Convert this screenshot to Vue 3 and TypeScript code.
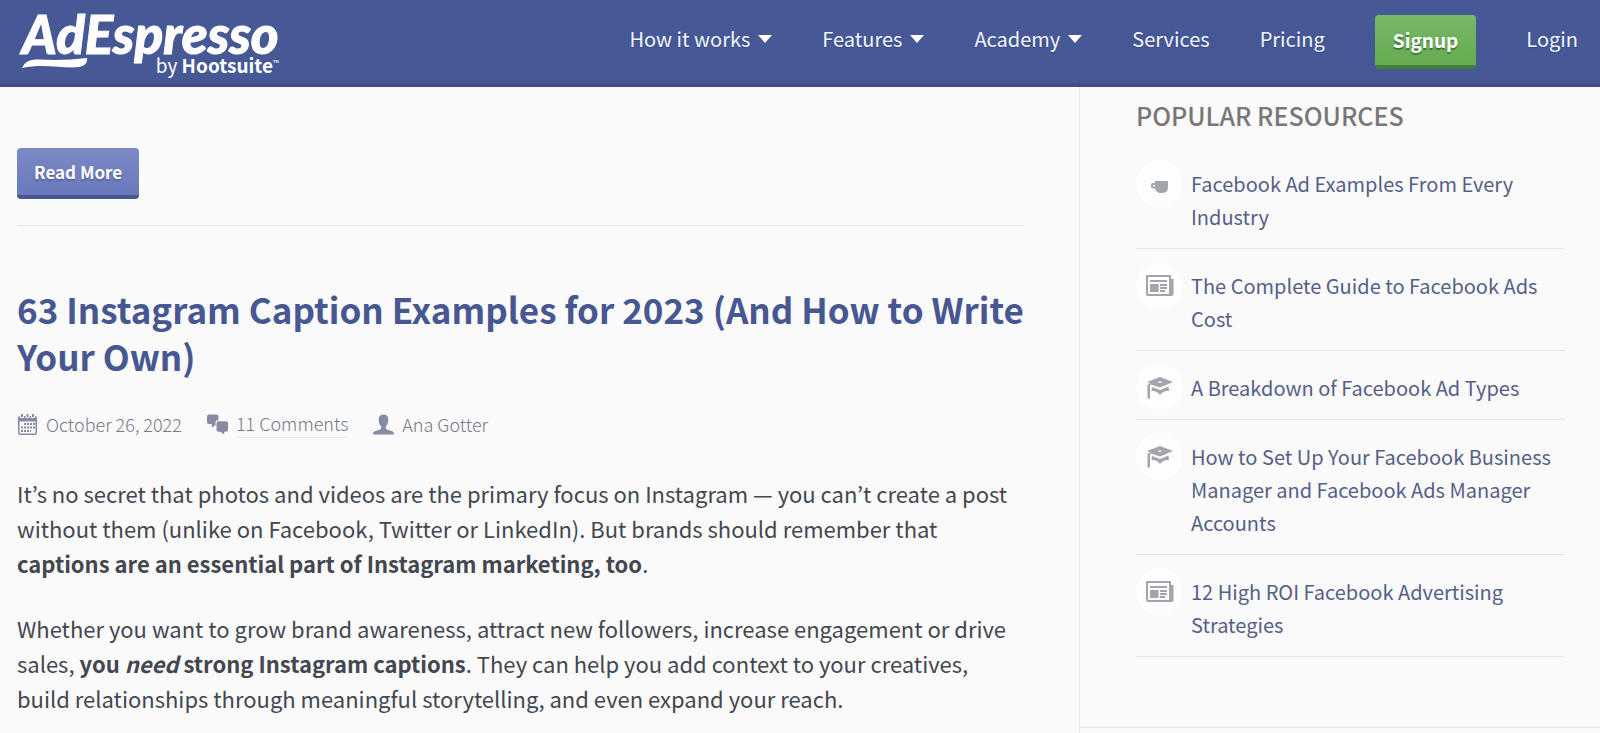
<script setup lang="ts">
type IconName = 'cup' | 'news' | 'cap'

interface NavItem {
  label: string
  menu: boolean
}

interface Resource {
  title: string
  icon: IconName
}

const navItems: NavItem[] = [
  { label: 'How it works', menu: true },
  { label: 'Features', menu: true },
  { label: 'Academy', menu: true },
  { label: 'Services', menu: false },
  { label: 'Pricing', menu: false },
]

const resources: Resource[] = [
  { title: 'Facebook Ad Examples From Every Industry', icon: 'cup' },
  { title: 'The Complete Guide to Facebook Ads Cost', icon: 'news' },
  { title: 'A Breakdown of Facebook Ad Types', icon: 'cap' },
  { title: 'How to Set Up Your Facebook Business Manager and Facebook Ads Manager Accounts', icon: 'cap' },
  { title: '12 High ROI Facebook Advertising Strategies', icon: 'news' },
]
</script>

<template>
  <div class="page">
    <header class="header">
      <a class="logo" href="#">
        <span class="logo-name">AdEspresso</span>
        <span class="logo-sub">
          <svg class="swoosh" viewBox="0 0 66 12" aria-hidden="true">
            <path d="M0 10C3 3 9 1 18 1.500C34 2.500 48 2 65 0C66 4 63 8 57 9C43 11 22 5 0 10Z" />
          </svg>
          <span class="logo-by">by <b>Hootsuite</b><small>™</small></span>
        </span>
      </a>
      <nav class="nav">
        <a v-for="item in navItems" :key="item.label" class="nav-link" href="#">
          {{ item.label }}
          <svg v-if="item.menu" class="caret" viewBox="0 0 14 8" aria-hidden="true"><path d="M0 0H14L7 8Z" /></svg>
        </a>
        <a class="signup" href="#">Signup</a>
        <a class="nav-link" href="#">Login</a>
      </nav>
    </header>

    <div class="columns">
      <main class="main">
        <div class="teaser-end">
          <a class="read-more" href="#">Read More</a>
        </div>

        <article>
          <h1 class="title"><a href="#">63 Instagram Caption Examples for 2023 (And How to Write Your Own)</a></h1>
          <div class="meta">
            <span class="meta-item">
              <svg class="meta-icon" viewBox="0 0 21 21" aria-hidden="true">
                <path
                  fill-rule="evenodd"
                  d="M3 2H18Q20 2 20 4V19Q20 21 18 21H3Q1 21 1 19V4Q1 2 3 2ZM2.500 7.500V19.500H18.500V7.500Z"
                />
                <path class="ring-gap" d="M5 0V4M10.500 0V4M16 0V4" />
                <path class="ring" d="M5 0V3M10.500 0V3M16 0V3" />
                <path class="days" d="M7 10H18M4 13.500H18M4 17H14" />
              </svg>
              October 26, 2022
            </span>
            <span class="meta-item">
              <svg class="meta-icon" viewBox="0 0 22 21" aria-hidden="true">
                <path d="M2 0H10Q12 0 12 2V6H11Q9 6 9 8V11L5 14V10H2Q0 10 0 8V2Q0 0 2 0Z" />
                <path d="M12 7H20Q22 7 22 9V16Q22 18 20 18H18V21L14 18H12Q10 18 10 16V9Q10 7 12 7Z" />
              </svg>
              <a class="comments" href="#">11 Comments</a>
            </span>
            <span class="meta-item">
              <svg class="meta-icon" viewBox="0 0 22 21" aria-hidden="true">
                <path
                  d="M11 0C14 0 16 2 16 5C16 9 15 11 13.500 12.500C13 15 14 15.500 17 16.500C21 18 22 18 22 21H0C0 18 1 18 5 16.500C8 15.500 9 15 8.500 12.500C7 11 6 9 6 5C6 2 8 0 11 0Z"
                />
              </svg>
              Ana Gotter
            </span>
          </div>
          <p>
            It’s no secret that photos and videos are the primary focus on Instagram — you can’t create a post
            without them (unlike on Facebook, Twitter or LinkedIn). But brands should remember that
            <strong>captions are an essential part of Instagram marketing, too</strong>.
          </p>
          <p>
            Whether you want to grow brand awareness, attract new followers, increase engagement or drive sales,
            <strong>you</strong> <em>need</em> <strong>strong Instagram captions</strong>. They can help you add
            context to your creatives, build relationships through meaningful storytelling, and even expand your
            reach.
          </p>
        </article>
      </main>

      <aside class="sidebar">
        <section class="popular">
          <h2 class="side-title">Popular Resources</h2>
          <ul class="resources">
            <li v-for="item in resources" :key="item.title" class="resource">
              <span class="badge">
                <svg v-if="item.icon === 'cup'" viewBox="0 0 28 24" aria-hidden="true">
                  <path d="M9 9H22V15Q22 21 15.500 21Q9 21 9 15Z" />
                  <path class="handle" d="M10 12H7Q6 12 6 13V14.500Q6 15.500 7.500 15.500H10" />
                </svg>
                <svg v-else-if="item.icon === 'news'" viewBox="0 0 28 24" aria-hidden="true">
                  <path d="M24 5H27.500V20Q27.500 22 25.500 22H24Z" />
                  <path fill-rule="evenodd" d="M0 1H25V22H2Q0 22 0 20ZM2 3V20H23V3Z" />
                  <path d="M4 6H21V8H4ZM4 10H12.500V18H4ZM14 10H21V12H14ZM14 13H21V15H14ZM14 16H19V18H14Z" />
                </svg>
                <svg v-else viewBox="0 0 28 24" aria-hidden="true">
                  <path
                    fill-rule="evenodd"
                    d="M14 1L27 6L14 11.500L5 8.500L4 9.500V22.500H1.500V9L4 7L1 6ZM14 5.200L11.500 6L14 7L16.500 6Z"
                  />
                  <path d="M6 11L14 14L22.500 10.500L23 15C19 14.500 16.500 15.500 14 19C11.500 15.500 9 14.500 5.500 15Z" />
                </svg>
              </span>
              <a class="resource-link" href="#">{{ item.title }}</a>
            </li>
          </ul>
        </section>
      </aside>
    </div>
  </div>
</template>

<style>
body {
  margin: 0;
  background: #fafafa;
}
</style>

<style scoped>
.page {
  font-family: 'Noto Sans CJK KR', 'Noto Sans', sans-serif;
  font-size: 22px;
  line-height: 35px;
  color: #43474f;
  height: 100vh;
  display: flex;
  flex-direction: column;
  overflow: hidden;
}

a {
  color: inherit;
  text-decoration: none;
}

.header {
  flex: none;
  box-sizing: border-box;
  height: 87px;
  padding: 0 22px;
  background: #475896;
  border-bottom: 4px solid #434e86;
  display: flex;
  align-items: flex-start;
  justify-content: space-between;
  color: #f3f6ff;
}

.logo {
  display: flex;
  flex-direction: column;
  padding-top: 12px;
  color: #fff;
}

.logo-name {
  font-family: Lato, 'Liberation Sans', sans-serif;
  font-weight: 900;
  font-style: italic;
  font-size: 53px;
  line-height: 44px;
  -webkit-text-stroke: 1px #fff;
}

.logo-sub {
  display: flex;
  justify-content: space-between;
}

.swoosh {
  width: 66px;
  height: 12px;
  margin-top: 2px;
  fill: #fff;
}

.logo-by {
  font-size: 19px;
  line-height: 18px;
}

.logo-by small {
  font-size: 8px;
  vertical-align: super;
  line-height: 8px;
}

.nav {
  display: flex;
  align-items: flex-start;
  gap: 50px;
  padding-top: 15px;
  font-size: 20px;
}

.nav-link {
  display: flex;
  align-items: center;
  gap: 8px;
  line-height: 48px;
  text-shadow: 0 1px 1px #37457c;
}

.caret {
  width: 14px;
  height: 8px;
  fill: #fff;
}

.signup {
  box-sizing: border-box;
  height: 54px;
  padding: 0 18px;
  font-size: 19px;
  line-height: 50px;
  font-weight: 700;
  color: #fff;
  text-shadow: 0 2px 1px #41763a;
  border-radius: 4px;
  border-bottom: 4px solid #467f3b;
  background: linear-gradient(#77b768, #66ab51);
}

.columns {
  flex: 1;
  min-height: 0;
  display: grid;
  grid-template-columns: 1079fr 521fr;
}

.main {
  padding: 61px 55px 0 17px;
}

.teaser-end {
  padding-bottom: 26px;
  border-bottom: 1px solid #e6e6e8;
}

.read-more {
  display: block;
  width: max-content;
  box-sizing: border-box;
  height: 51px;
  padding: 0 17px;
  font-size: 17px;
  line-height: 47px;
  font-weight: 700;
  color: #fff;
  text-shadow: 0 2px 2px #55629b;
  border-radius: 4px;
  border-bottom: 4px solid #48568f;
  background: linear-gradient(#7c88c4, #6a7abd);
}

.title {
  margin: 59px 0 31px;
  font-size: 35px;
  line-height: 47px;
  font-weight: 700;
  color: #475792;
}

.meta {
  display: flex;
  gap: 25px;
  font-size: 18px;
  font-weight: 300;
  line-height: 27px;
  color: #747987;
  margin-bottom: 38px;
}

.meta-item {
  display: flex;
  align-items: center;
  gap: 8px;
}

.meta-icon {
  width: 21px;
  height: 21px;
  fill: #868ba3;
}

.ring-gap {
  stroke: #fafafa;
  stroke-width: 4;
}

.ring,
.days {
  fill: none;
  stroke: #868ba3;
  stroke-width: 2;
}

.days {
  stroke-dasharray: 2 1;
}

.comments {
  border-bottom: 1px solid #e9eaec;
}

p {
  margin: 0 0 30px;
}

strong,
em {
  font-weight: 700;
}

.sidebar {
  border-left: 1px solid #e8e8ea;
}

.popular {
  padding: 9px 35px 70px 56px;
  border-bottom: 1px solid #e4e4e6;
}

.side-title {
  margin: 0 0 12px;
  font-size: 25px;
  line-height: 39px;
  font-weight: 500;
  text-transform: uppercase;
  color: #777;
}

.resources {
  list-style: none;
  margin: 0;
  padding: 0;
}

.resource {
  display: flex;
  align-items: flex-start;
  gap: 8px;
  padding: 20px 0 15px;
  border-bottom: 1px solid #e6e6ea;
}

.badge {
  flex: none;
  display: flex;
  align-items: center;
  justify-content: center;
  width: 47px;
  height: 47px;
  margin: -7px 0;
  border-radius: 50%;
  background: #fdfdfd;
}

.badge svg {
  width: 28px;
  height: 24px;
  fill: #a3a5ad;
}

.badge .handle {
  fill: none;
  stroke: #a3a5ad;
  stroke-width: 2;
}

.resource-link {
  font-size: 20px;
  line-height: 33px;
  color: #555f88;
}
</style>
